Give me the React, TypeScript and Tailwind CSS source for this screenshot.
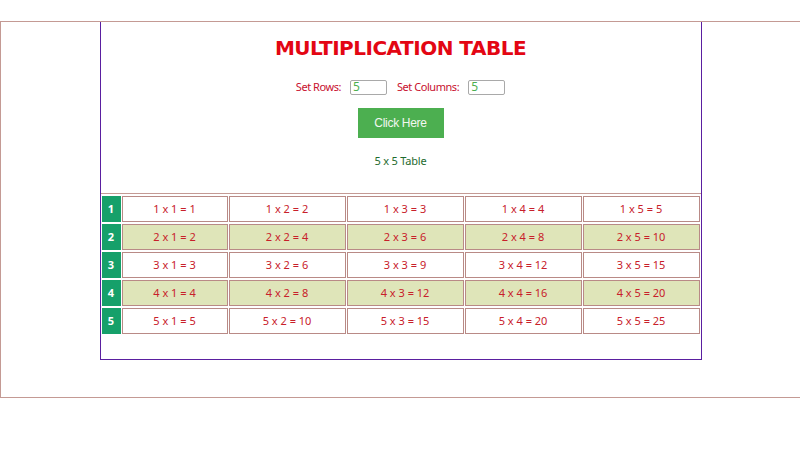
import { useState } from 'react'

export default function App() {
  const [rows, setRows] = useState('5')
  const [cols, setCols] = useState('5')
  const [size, setSize] = useState({ r: 5, c: 5 })

  const build = () => {
    const r = parseInt(rows) || 0
    const c = parseInt(cols) || 0
    setSize({ r, c })
  }

  return (
    <div className="pt-[21px] font-['Noto_Sans',sans-serif]">
      <div className="border-y border-l border-[#c49a94] pb-[37px]">
        <div className="mx-auto w-[602px] border border-t-0 border-[#5a1fa0] flex flex-col items-center pb-[23px]">
          <h1 className="mt-[13px] h-[26px] leading-[26px] text-[20px] font-bold text-[#e30613] tracking-[-0.5px] font-['DejaVu_Sans',sans-serif]">
            MULTIPLICATION TABLE
          </h1>

          <div className="mt-[18px] flex items-center h-[16px] text-[11px] tracking-[-0.45px] text-[#c8102e]">
            <label className="mr-[9px]">Set Rows:</label>
            <input
              value={rows}
              onChange={(e) => setRows(e.target.value)}
              className="w-[37px] h-[15px] border border-[#a9a9a9] rounded-[2px] px-[2px] text-[12px] text-[#4caf50] outline-none"
            />
            <label className="ml-[10px] mr-[9px]">Set Columns:</label>
            <input
              value={cols}
              onChange={(e) => setCols(e.target.value)}
              className="w-[37px] h-[15px] border border-[#a9a9a9] rounded-[2px] px-[2px] text-[12px] text-[#4caf50] outline-none"
            />
          </div>

          <button
            onClick={build}
            className="mt-[13px] w-[86px] h-[30px] bg-[#4caf50] text-[#f2f7f0] text-[12px] tracking-[-0.3px] font-['Liberation_Sans',sans-serif]"
          >
            Click Here
          </button>

          <p className="mt-[15px] h-[16px] leading-[16px] text-[11px] tracking-[-0.2px] text-[#1e6b2e]">
            {size.r} x {size.c} Table
          </p>

          <table className="mt-[24px] w-full table-fixed border-separate border-spacing-x-[1px] border-spacing-y-[2px] border-t border-[#c49a94] text-[11px]">
            <colgroup>
              <col className="w-[19px]" />
              <col className="w-[106px]" />
              <col className="w-[117px]" />
              <col className="w-[117px]" />
              <col className="w-[117px]" />
              <col className="w-[117px]" />
            </colgroup>
            <tbody>
              {Array.from({ length: size.r }, (_, i) => (
                <tr key={i}>
                  <td className="h-[26px] bg-[#16a06a] text-white font-bold text-center">{i + 1}</td>
                  {Array.from({ length: size.c }, (_, j) => (
                    <td
                      key={j}
                      className={
                        'h-[26px] border border-[#b98a86] text-center text-[#c8202a] ' +
                        (i % 2 === 1 ? 'bg-[#dfe5b9]' : 'bg-white')
                      }
                    >
                      {i + 1} x {j + 1} = {(i + 1) * (j + 1)}
                    </td>
                  ))}
                </tr>
              ))}
            </tbody>
          </table>
        </div>
      </div>
    </div>
  )
}
